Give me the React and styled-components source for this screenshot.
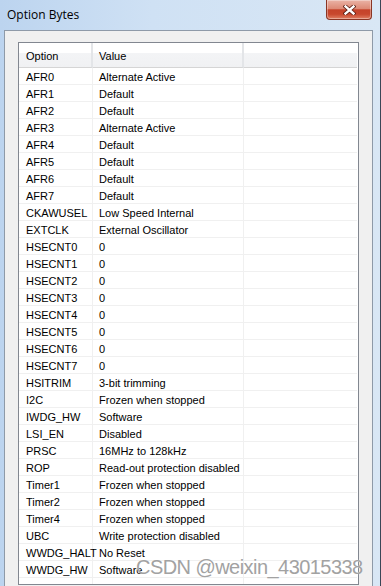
import styled, { createGlobalStyle } from "styled-components";

const GlobalStyle = createGlobalStyle`
  html, body {
    margin: 0;
    padding: 0;
    background: #c8dcf2;
  }
  #root {
    width: 381px;
    height: 586px;
  }
`;

const rows = [
  ["AFR0", "Alternate Active"],
  ["AFR1", "Default"],
  ["AFR2", "Default"],
  ["AFR3", "Alternate Active"],
  ["AFR4", "Default"],
  ["AFR5", "Default"],
  ["AFR6", "Default"],
  ["AFR7", "Default"],
  ["CKAWUSEL", "Low Speed Internal"],
  ["EXTCLK", "External Oscillator"],
  ["HSECNT0", "0"],
  ["HSECNT1", "0"],
  ["HSECNT2", "0"],
  ["HSECNT3", "0"],
  ["HSECNT4", "0"],
  ["HSECNT5", "0"],
  ["HSECNT6", "0"],
  ["HSECNT7", "0"],
  ["HSITRIM", "3-bit trimming"],
  ["I2C", "Frozen when stopped"],
  ["IWDG_HW", "Software"],
  ["LSI_EN", "Disabled"],
  ["PRSC", "16MHz to 128kHz"],
  ["ROP", "Read-out protection disabled"],
  ["Timer1", "Frozen when stopped"],
  ["Timer2", "Frozen when stopped"],
  ["Timer4", "Frozen when stopped"],
  ["UBC", "Write protection disabled"],
  ["WWDG_HALT", "No Reset"],
  ["WWDG_HW", "Software"],
];

const Window = styled.div`
  position: relative;
  width: 381px;
  height: 586px;
  box-sizing: border-box;
  display: flex;
  flex-direction: column;
  overflow: hidden;
  background: linear-gradient(90deg, #bcd4ef 0%, #cfe1f4 40%, #d9e7f5 100%);
  border-right: 1px solid #3a4656;
  font-family: "Liberation Sans", Arial, sans-serif;
`;

const TitleBar = styled.div`
  height: 30px;
  flex: none;
  display: flex;
  justify-content: space-between;
  align-items: flex-start;
  padding-left: 7px;
  padding-right: 8px;
`;

const Title = styled.span`
  font-family: "Open Sans", "Noto Sans", sans-serif;
  font-size: 12px;
  line-height: 30px;
  color: #000;
`;

const CloseButton = styled.div`
  width: 46px;
  height: 20px;
  box-sizing: border-box;
  display: flex;
  align-items: center;
  justify-content: center;
  border: 1px solid #8a3524;
  border-top: none;
  border-radius: 0 0 4px 4px;
  background: linear-gradient(
    180deg,
    #eab3a6 0%,
    #dd8a76 45%,
    #c5432a 52%,
    #c8482e 75%,
    #e08064 100%
  );
  box-shadow: inset 0 0 0 1px rgba(255, 255, 255, 0.35);
`;

const Client = styled.div`
  flex: 1;
  margin: 0 7px 0 4px;
  border-left: 1px solid #8e9aa8;
  border-top: 1px solid #8e9aa8;
  border-right: 1px solid #8e9aa8;
  background: #f0f0f0;
  padding: 11px 13px 0 13px;
  display: flex;
  flex-direction: column;
`;

const ListBox = styled.div`
  flex: none;
  height: 543px;
  box-sizing: border-box;
  border: 1px solid #828790;
  background: #fff;
  padding-right: 1px;
  overflow: hidden;
  font-size: 11px;
  color: #000;
`;

const Grid = styled.div`
  display: grid;
  grid-template-columns: 74px 151px 1fr;
`;

const HeadCell = styled.div`
  height: 25px;
  box-sizing: border-box;
  display: flex;
  align-items: center;
  padding-left: ${(p) => p.$pad || 7}px;
  padding-top: 1px;
  background: linear-gradient(180deg, #ffffff 0%, #ffffff 42%, #f3f4f6 43%, #f0f1f3 100%);
  border-bottom: 1px solid #d5d5d5;
  border-right: ${(p) => (p.$last ? "none" : "2px solid #e3e5e8")};
`;

const Cell = styled.div`
  height: 17px;
  box-sizing: border-box;
  display: flex;
  align-items: center;
  padding-left: ${(p) => p.$pad || 7}px;
  padding-top: 2px;
  white-space: nowrap;
  border-bottom: 1px solid #f0f0f0;
  border-right: ${(p) => (p.$last ? "none" : "1px solid #f0f0f0")};
`;

const Watermark = styled.div`
  position: absolute;
  left: 136px;
  top: 556px;
  font-family: "Liberation Sans", Arial, sans-serif;
  font-size: 20px;
  color: #a2a2a2;
  letter-spacing: -0.55px;
  white-space: nowrap;
  text-shadow: 0 0 1px #fff;
`;

const App = () => {
  return (
    <>
      <GlobalStyle />
      <Window>
        <TitleBar>
          <Title>Option Bytes</Title>
          <CloseButton>
            <svg width="13" height="10" viewBox="0 0 13 10">
              <path
                d="M2.5 1.5 L10.5 8.5 M10.5 1.5 L2.5 8.5"
                stroke="#5a1d12"
                strokeWidth="4"
                strokeLinecap="square"
              />
              <path
                d="M2.5 1.5 L10.5 8.5 M10.5 1.5 L2.5 8.5"
                stroke="#fff"
                strokeWidth="2.4"
                strokeLinecap="square"
              />
            </svg>
          </CloseButton>
        </TitleBar>
        <Client>
          <ListBox>
            <Grid>
              <HeadCell>Option</HeadCell>
              <HeadCell $pad={6}>Value</HeadCell>
              <HeadCell $last />
              {rows.map(([name, value]) => (
                <>
                  <Cell key={name + "a"}>{name}</Cell>
                  <Cell key={name + "b"} $pad={6}>{value}</Cell>
                  <Cell key={name + "c"} $last />
                </>
              ))}
              <Cell />
              <Cell />
              <Cell $last />
            </Grid>
          </ListBox>
        </Client>
        <Watermark>CSDN @weixin_43015338</Watermark>
      </Window>
    </>
  );
};

export default App;
